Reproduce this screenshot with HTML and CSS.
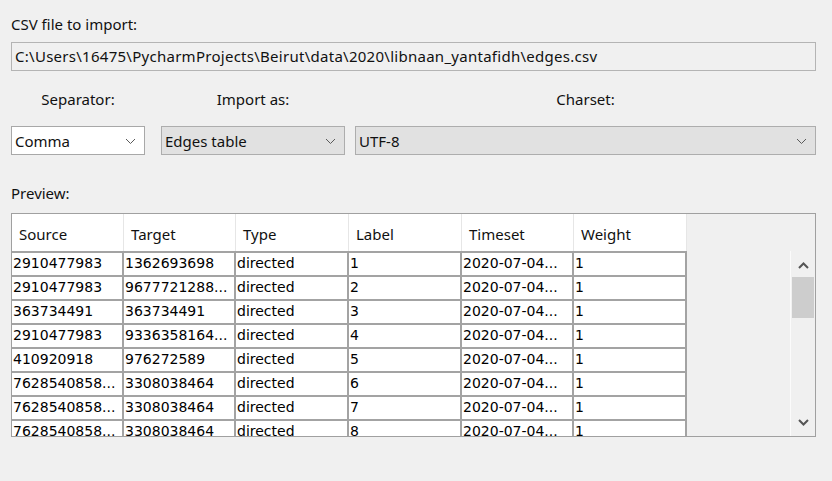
FILE: index.html
```html
<!DOCTYPE html>
<html lang="en">
<head>
    <meta charset="UTF-8">
    <title>Import CSV</title>
    <link rel="stylesheet" href="styles.css">
</head>
<body>
    <div class="dialog">
        <div class="field-label">CSV file to import:</div>
        <div class="path-field">C:\Users\16475\PycharmProjects\Beirut\data\2020\libnaan_yantafidh\edges.csv</div>

        <div class="options options-labels">
            <div>Separator:</div>
            <div>Import as:</div>
            <div>Charset:</div>
        </div>
        <div class="options">
            <div class="combo combo-white">
                <span>Comma</span>
                <svg width="11" height="7" viewBox="0 0 11 7"><polyline points="1,1 5.5,5.5 10,1" fill="none" stroke="#5a5a5a" stroke-width="1"/></svg>
            </div>
            <div class="combo">
                <span>Edges table</span>
                <svg width="11" height="7" viewBox="0 0 11 7"><polyline points="1,1 5.5,5.5 10,1" fill="none" stroke="#5a5a5a" stroke-width="1"/></svg>
            </div>
            <div class="combo">
                <span>UTF-8</span>
                <svg width="11" height="7" viewBox="0 0 11 7"><polyline points="1,1 5.5,5.5 10,1" fill="none" stroke="#5a5a5a" stroke-width="1"/></svg>
            </div>
        </div>

        <div class="preview-label">Preview:</div>
        <div class="table-box">
            <div class="thead">
                <div class="row">
                    <div class="th">Source</div>
                    <div class="th">Target</div>
                    <div class="th">Type</div>
                    <div class="th">Label</div>
                    <div class="th">Timeset</div>
                    <div class="th">Weight</div>
                </div>
                <div class="filler"></div>
            </div>
            <div class="tbody">
                <div class="rows" id="rows"></div>
                <div class="filler"></div>
                <div class="scrollbar">
                    <svg class="arrow-up" width="11" height="7" viewBox="0 0 11 7"><polyline points="1,6 5.5,1.5 10,6" fill="none" stroke="#555" stroke-width="2"/></svg>
                    <div class="thumb"></div>
                    <svg class="arrow-down" width="11" height="7" viewBox="0 0 11 7"><polyline points="1,1 5.5,5.5 10,1" fill="none" stroke="#555" stroke-width="2"/></svg>
                </div>
            </div>
        </div>
    </div>

    <script>
        const edges = [
            ['2910477983', '1362693698', 'directed', '1'],
            ['2910477983', '9677721288...', 'directed', '2'],
            ['363734491', '363734491', 'directed', '3'],
            ['2910477983', '9336358164...', 'directed', '4'],
            ['410920918', '976272589', 'directed', '5'],
            ['7628540858...', '3308038464', 'directed', '6'],
            ['7628540858...', '3308038464', 'directed', '7'],
            ['7628540858...', '3308038464', 'directed', '8']
        ];

        const rows = document.getElementById('rows');
        edges.forEach(e => {
            const row = document.createElement('div');
            row.className = 'row';
            e.concat(['2020-07-04...', '1']).forEach(v => {
                const cell = document.createElement('div');
                cell.className = 'td';
                cell.textContent = v;
                row.appendChild(cell);
            });
            rows.appendChild(row);
        });
    </script>
</body>
</html>
```

FILE: styles.css
```css
body {
    margin: 0;
    background-color: #f0f0f0;
    font-family: "Noto Sans", sans-serif;
    font-size: 15px;
    color: #111;
}

.dialog {
    padding: 14px 16px 0 11px;
}

.field-label {
    line-height: 20px;
}

.path-field {
    margin-top: 8px;
    height: 29px;
    box-sizing: border-box;
    border: 1px solid #b4b4b4;
    padding-left: 3px;
    line-height: 26px;
    letter-spacing: 0.27px;
    white-space: nowrap;
}

.options {
    display: grid;
    grid-template-columns: 134px 184px 1fr;
    column-gap: 16px;
    margin-top: 17px;
}

.options > div:nth-child(3) {
    margin-left: -6px;
}

.options-labels {
    margin-top: 18px;
    line-height: 20px;
    text-align: center;
}

.combo {
    height: 29px;
    box-sizing: border-box;
    border: 1px solid #adadad;
    background-color: #e1e1e1;
    display: flex;
    align-items: center;
    justify-content: space-between;
    padding: 0 8px 0 3px;
    line-height: 26px;
}

.combo svg {
    margin-top: 2px;
}

.combo-white {
    background-color: #fff;
    border-color: #a8a8a8;
}

.preview-label {
    margin-top: 28px;
    line-height: 20px;
}

.table-box {
    margin-top: 10px;
    height: 224px;
    box-sizing: border-box;
    border: 1px solid #a0a0a0;
    display: flex;
    flex-direction: column;
    overflow: hidden;
}

.row {
    display: grid;
    grid-template-columns: 112px 112px 113px 113px 112px 113px;
    width: 675px;
}

.thead {
    display: flex;
    height: 37px;
}

.th {
    background-color: #fff;
    border-right: 1px solid #e6e6e6;
    padding-left: 7px;
    line-height: 40px;
    white-space: nowrap;
}

.filler {
    flex: 1;
}

.tbody {
    display: flex;
    flex: 1;
    min-height: 0;
}

.rows {
    width: 675px;
    overflow: hidden;
    border-top: 2px solid #a3a3a3;
}

.td {
    background-color: #fff;
    height: 24px;
    box-sizing: border-box;
    border-right: 2px solid #a3a3a3;
    border-bottom: 2px solid #a3a3a3;
    padding-left: 1px;
    font-family: "DejaVu Sans", sans-serif;
    font-size: 14px;
    line-height: 20px;
    color: #000;
    white-space: nowrap;
    overflow: hidden;
}

.scrollbar {
    width: 24px;
    border-left: 1px solid #fbfbfb;
    display: flex;
    flex-direction: column;
    align-items: center;
}

.arrow-up {
    margin-top: 11px;
}

.thumb {
    margin-top: 8px;
    width: 22px;
    height: 41px;
    background-color: #cdcdcd;
}

.arrow-down {
    margin-top: auto;
    margin-bottom: 10px;
}
```
